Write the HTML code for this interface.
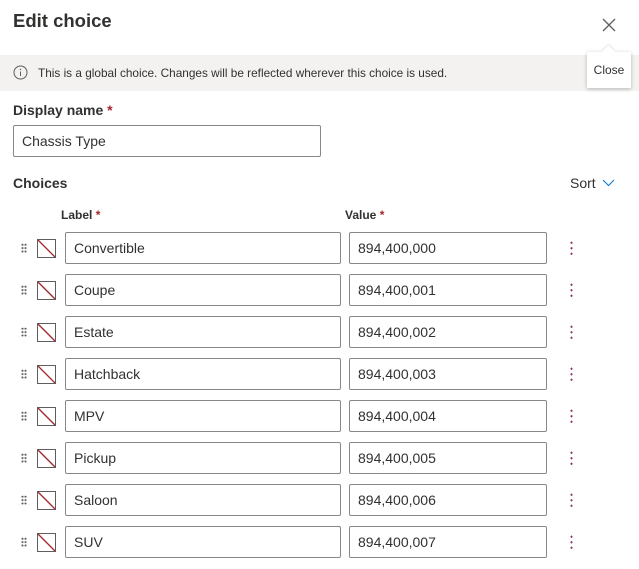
<!DOCTYPE html><html><head><style>
body{margin:0;width:639px;height:569px;background:#fff;font-family:"Liberation Sans",sans-serif;color:#323130;position:relative;overflow:hidden}
.a{position:absolute}
.in{position:absolute;height:30px;border:1px solid #8a8886;border-radius:2px;font-size:14px;line-height:31px;padding-left:8px;box-sizing:content-box}
.st{color:#a4262c}
.dots{position:absolute;width:6px;height:10px;background-image:radial-gradient(circle,#605e5c 0.9px,transparent 1.1px);background-size:3px 3.4px}
.kb{position:absolute;width:3px;height:16px;background-image:radial-gradient(circle,#8b3a6b 1px,transparent 1.2px);background-size:3px 5.5px}
</style></head><body>
<div class="a" style="left:13px;top:10px;font-size:18.5px;font-weight:600">Edit choice</div>
<svg class="a" style="left:602px;top:18px" width="14" height="14"><path d="M1 1L13 13M13 1L1 13" stroke="#605e5c" stroke-width="1.3"/></svg>
<div class="a" style="left:0;top:55px;width:639px;height:36px;background:#f3f2f1"></div>
<svg class="a" style="left:13px;top:65px" width="15" height="15"><circle cx="7.5" cy="7.5" r="6.5" fill="none" stroke="#605e5c"/><path d="M7.5 6.5V11" stroke="#605e5c"/><circle cx="7.5" cy="4.5" r=".7" fill="#605e5c"/></svg>
<div class="a" style="left:38px;top:66px;font-size:11.8px">This is a global choice. Changes will be reflected wherever this choice is used.</div>
<div class="a" style="left:587px;top:52px;width:44px;height:36px;background:#fff;box-shadow:0 1px 4px rgba(0,0,0,.25);font-size:12px;line-height:36px;text-align:center">Close</div>
<div class="a" style="left:604px;top:47px;width:9px;height:9px;background:#fff;transform:rotate(45deg);box-shadow:-1px -1px 2px rgba(0,0,0,.1)"></div>
<div class="a" style="left:13px;top:102px;font-size:14px;font-weight:600">Display name <span class="st">*</span></div>
<div class="in" style="left:13px;top:125px;width:298px">Chassis Type</div>
<div class="a" style="left:13px;top:175px;font-size:14px;font-weight:600">Choices</div>
<div class="a" style="left:570px;top:175px;font-size:14px">Sort</div>
<svg class="a" style="left:602px;top:179px" width="13" height="8"><path d="M1 1L6.5 6.5L12 1" stroke="#0078d4" fill="none"/></svg>
<div class="a" style="left:61px;top:208px;font-size:12px;font-weight:600">Label <span class="st">*</span></div>
<div class="a" style="left:345px;top:208px;font-size:12px;font-weight:600">Value <span class="st">*</span></div>
<div id="rows"></div>
<script>
var n=["Convertible","Coupe","Estate","Hatchback","MPV","Pickup","Saloon","SUV"],h="";
n.forEach(function(t,i){var y=232+i*42;
h+='<div class="dots" style="left:21px;top:'+(y+11)+'px"></div>'+
'<svg class="a" style="left:37px;top:'+(y+7)+'px" width="19" height="19"><rect x=".5" y=".5" width="18" height="18" fill="#fff" stroke="#605e5c"/><path d="M1 1L18 18" stroke="#a4262c" stroke-width="1.3"/></svg>'+
'<div class="in" style="left:65px;top:'+y+'px;width:266px">'+t+'</div>'+
'<div class="in" style="left:349px;top:'+y+'px;width:188px">894,400,00'+i+'</div>'+
'<div class="kb" style="left:570px;top:'+(y+8)+'px"></div>';});
document.getElementById("rows").innerHTML=h;
</script>
</body></html>
